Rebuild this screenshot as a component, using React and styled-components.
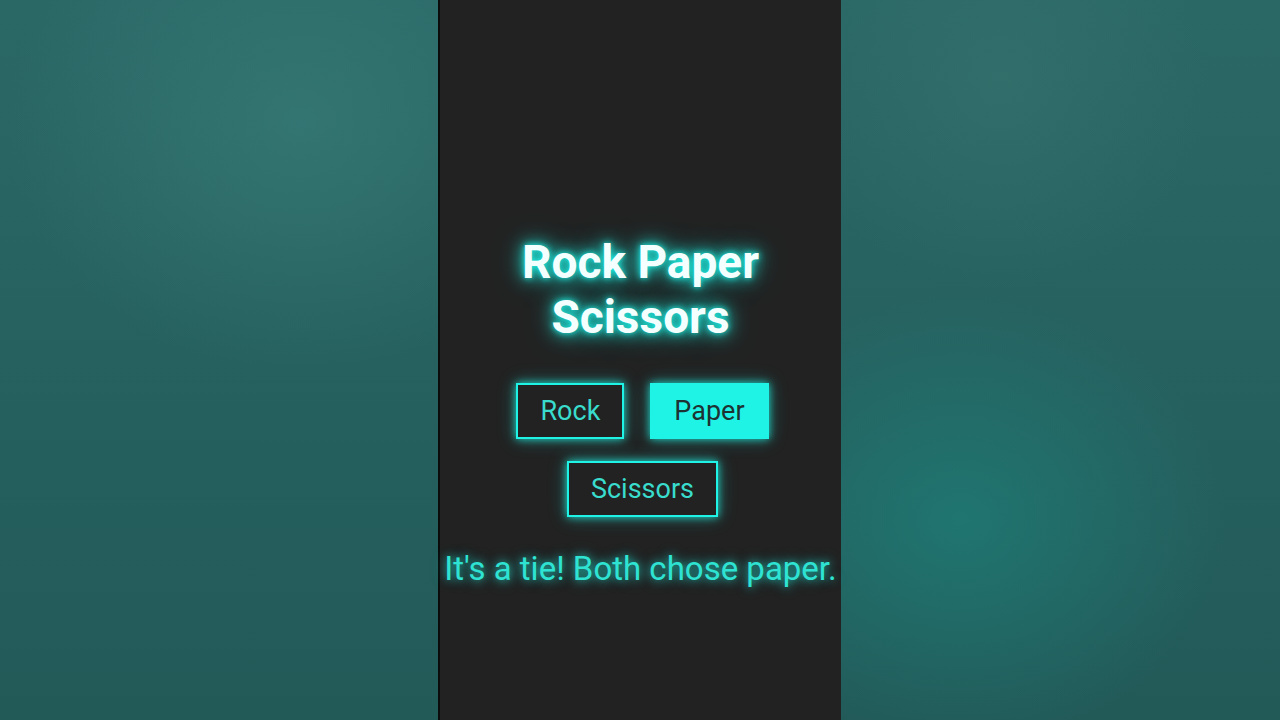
import React, { useState } from 'react';
import styled, { createGlobalStyle } from 'styled-components';

const neon = '#1ff3e6';

const GlobalStyle = createGlobalStyle`
  html, body {
    margin: 0;
    padding: 0;
    height: 100%;
  }
  body {
    font-family: Roboto, "Liberation Sans", sans-serif;
    background: #256260;
  }
  #root {
    height: 100%;
  }
`;

const Screen = styled.div`
  display: flex;
  width: 1280px;
  height: 720px;
  overflow: hidden;
  background:
    radial-gradient(ellipse 420px 360px at 300px 120px, rgba(60, 130, 125, 0.55), transparent 70%),
    radial-gradient(ellipse 380px 320px at 960px 520px, rgba(30, 125, 120, 0.75), transparent 70%),
    radial-gradient(ellipse 300px 300px at 1000px 80px, rgba(60, 120, 115, 0.45), transparent 70%),
    linear-gradient(180deg, #2a6866 0%, #225a58 100%);
`;

const Side = styled.div`
  flex: ${(p) => (p.$left ? '0 0 438px' : '1 1 auto')};
`;

const Panel = styled.main`
  flex: 0 0 403px;
  background: #222222;
  border-left: 2px solid #0b0b0b;
  display: flex;
  flex-direction: column;
  align-items: center;
  padding-top: 235px;
  box-sizing: border-box;
`;

const Title = styled.h1`
  margin: 0;
  font-size: 46px;
  line-height: 55px;
  font-weight: 700;
  color: #f4ffff;
  text-align: center;
  text-shadow: 0 0 6px ${neon}, 0 0 16px ${neon}, 0 0 28px rgba(31, 243, 230, 0.6);
`;

const Choices = styled.div`
  display: flex;
  flex-wrap: wrap;
  justify-content: center;
  gap: 22px 26px;
  margin: 38px 0 0 4px;
  width: 300px;
`;

const Choice = styled.button`
  font-family: Roboto, "Liberation Sans", sans-serif;
  font-size: 27px;
  line-height: 30px;
  padding: 11px 22px;
  border: 2px solid ${neon};
  border-radius: 0;
  background: ${(p) => (p.$active ? neon : '#222222')};
  color: ${(p) => (p.$active ? '#1d3232' : '#39dccd')};
  box-shadow: 0 0 8px rgba(31, 243, 230, 0.8), 0 0 18px rgba(31, 243, 230, 0.35);
  cursor: pointer;
`;

const Result = styled.p`
  margin: 32px 0 0;
  font-size: 33px;
  line-height: 40px;
  color: #2fe3d3;
  white-space: nowrap;
  text-shadow: 0 0 8px rgba(31, 243, 230, 0.75), 0 0 16px rgba(31, 243, 230, 0.35);
`;

export default function App() {
  const [pick, setPick] = useState('paper');
  const options = ['Rock', 'Paper', 'Scissors'];
  return (
    <>
      <GlobalStyle />
      <Screen>
        <Side $left />
        <Panel>
          <Title>
            Rock Paper
            <br />
            Scissors
          </Title>
          <Choices>
            {options.map((o) => (
              <Choice
                key={o}
                $active={pick === o.toLowerCase()}
                onClick={() => setPick(o.toLowerCase())}
              >
                {o}
              </Choice>
            ))}
          </Choices>
          <Result>It's a tie! Both chose {pick}.</Result>
        </Panel>
        <Side />
      </Screen>
    </>
  );
}
